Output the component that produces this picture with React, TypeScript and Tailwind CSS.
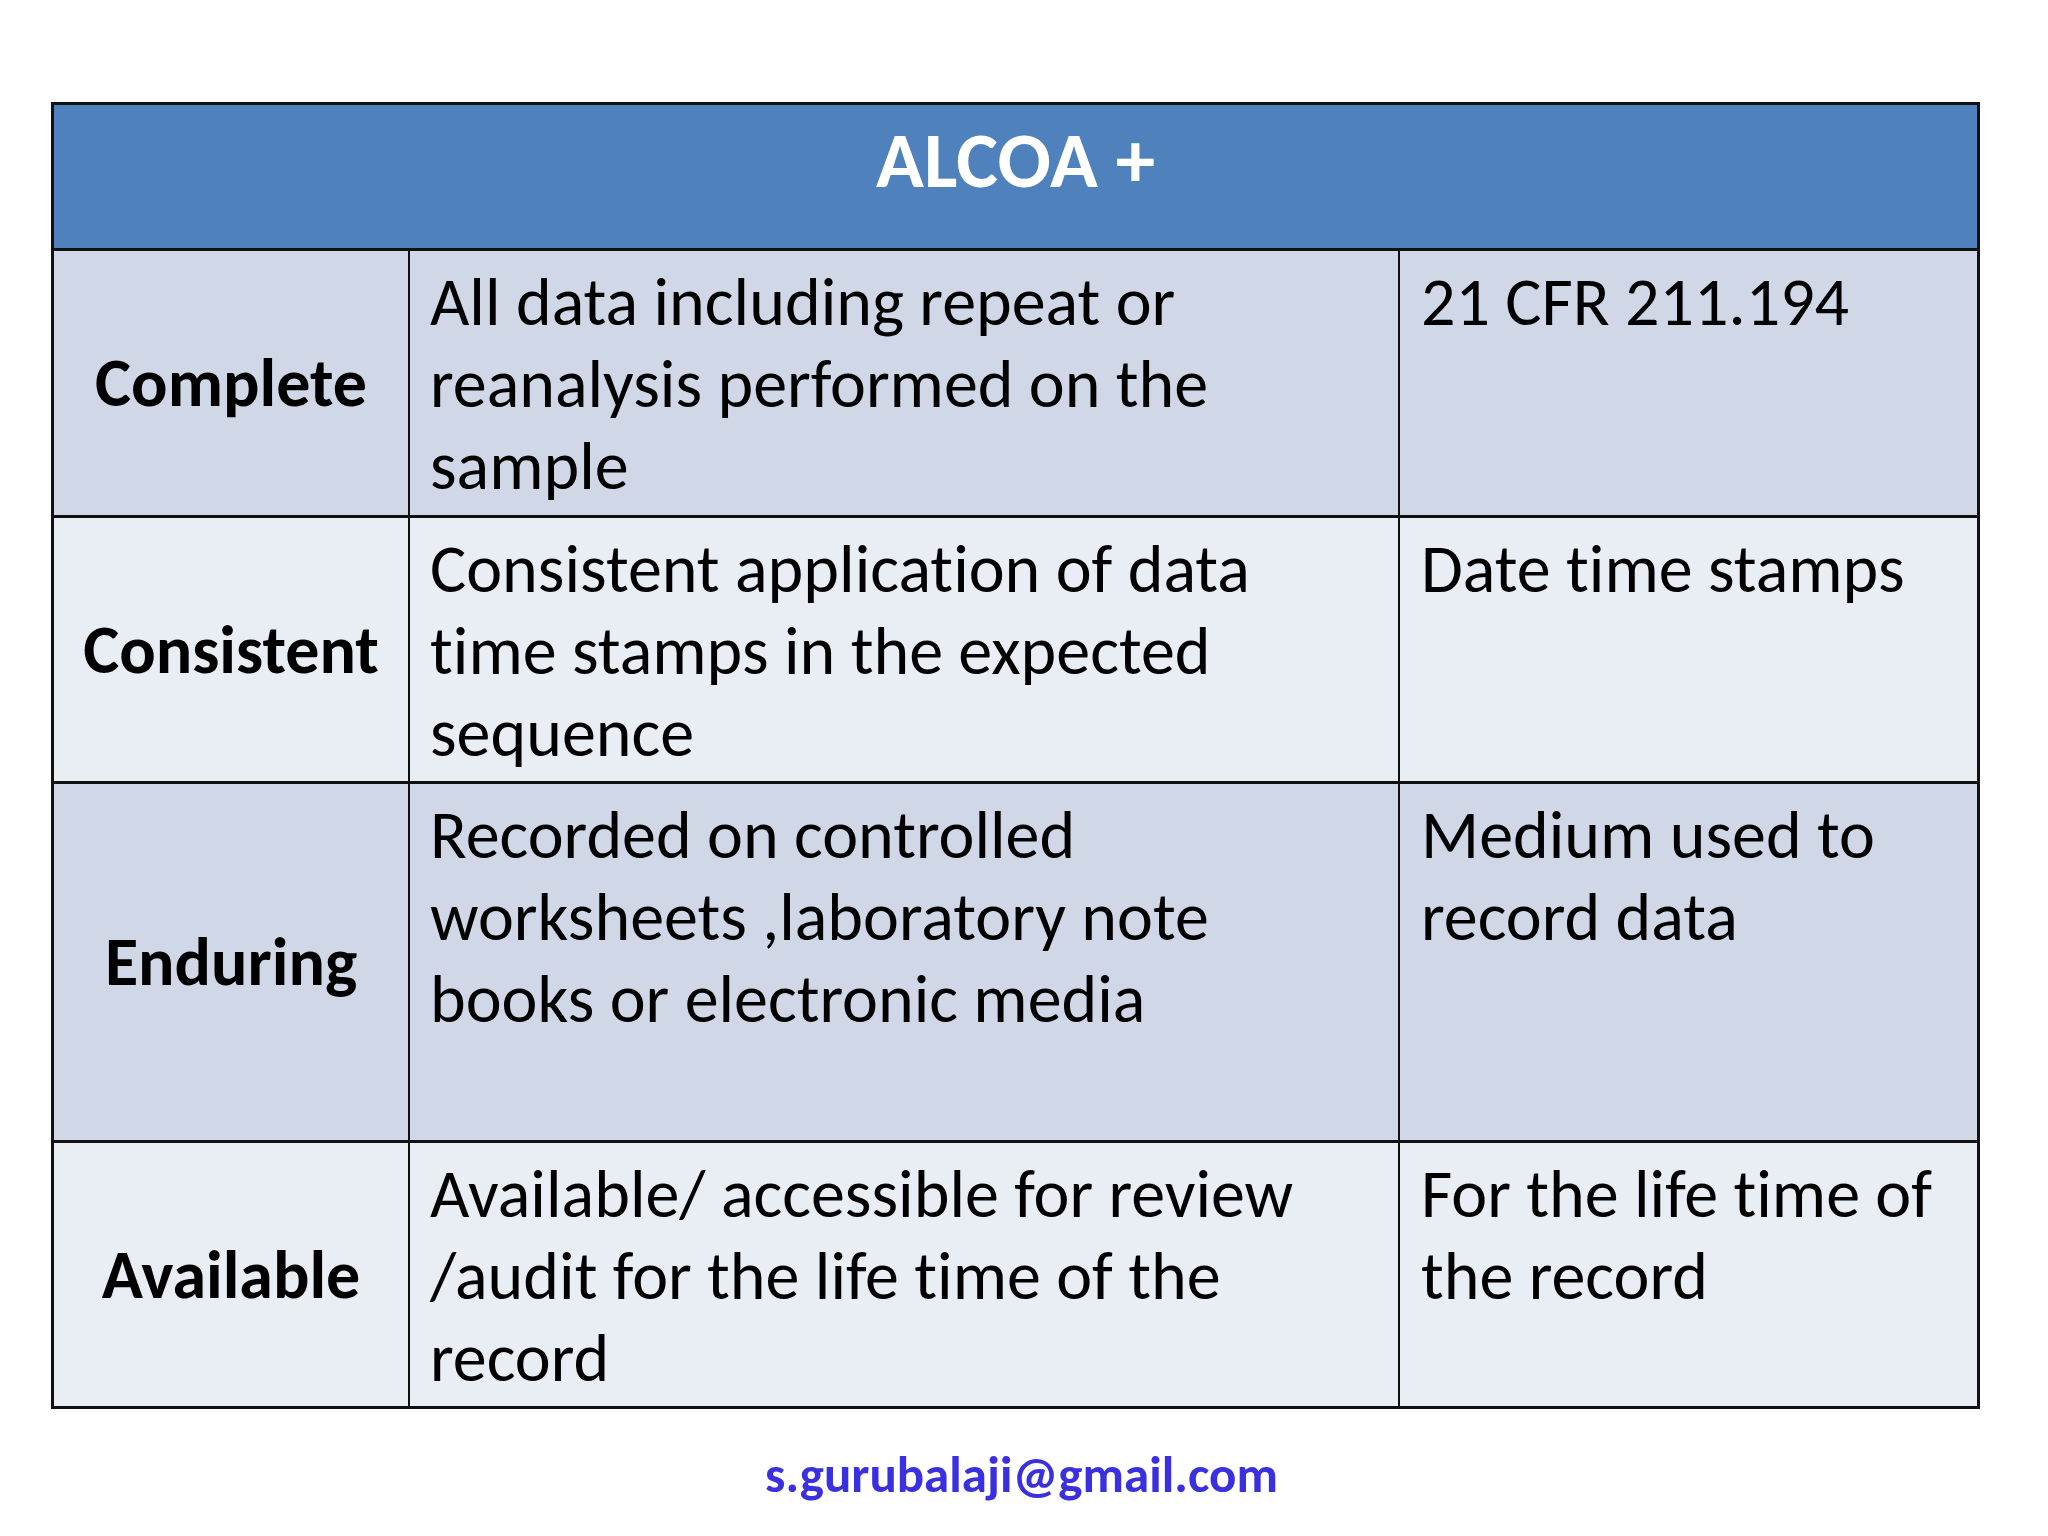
const FONT = "font-['Carlito','Lato','Noto_Sans',sans-serif] [font-variant-ligatures:none]";

const ROWS = [
  {
    label: "Complete",
    text: ["All data including repeat or", "reanalysis performed on the", "sample"],
    ref: ["21 CFR 211.194"],
    h: "h-[267px]",
    bg: "bg-[#d0d8e8]",
  },
  {
    label: "Consistent",
    text: ["Consistent application of data", "time stamps in the expected", "sequence"],
    ref: ["Date time stamps"],
    h: "h-[266px]",
    bg: "bg-[#e9edf4]",
  },
  {
    label: "Enduring",
    text: ["Recorded on controlled", "worksheets ,laboratory note", "books or electronic media"],
    ref: ["Medium used to", "record data"],
    h: "h-[359px]",
    bg: "bg-[#d0d8e8]",
  },
  {
    label: "Available",
    text: ["Available/ accessible for review", "/audit for the life time of the", "record"],
    ref: ["For the life time of", "the record"],
    h: "h-[266px]",
    bg: "bg-[#e9edf4]",
  },
];

const Lines = ({ lines }: { lines: string[] }) => (
  <div className="text-[68px] leading-[82px] text-black">
    {lines.map((l, i) => (
      <div key={i} className="whitespace-nowrap">
        {l}
      </div>
    ))}
  </div>
);

export default function App() {
  return (
    <div className={`w-full h-[1536px] bg-white ${FONT} pt-[102px] pl-[51px]`}>
      <div className="w-[1929px] border-[3px] border-[#111]">
        <div className="h-[143px] bg-[#4f81bd] flex justify-center pt-[7px]">
          <span className="text-[79px] leading-[96px] font-bold text-white">ALCOA +</span>
        </div>

        {ROWS.map((row) => (
          <div key={row.label} className={`flex border-t-[3px] border-[#111] ${row.h} ${row.bg}`}>
            <div className="w-[354px] flex items-center justify-center">
              <span className="text-[68px] font-bold text-black whitespace-nowrap">{row.label}</span>
            </div>
            <div className="w-[990px] border-l-[2px] border-[#111] pl-[20px] pt-[10px]">
              <Lines lines={row.text} />
            </div>
            <div className="flex-1 border-l-[2px] border-[#111] pl-[21px] pt-[10px]">
              <Lines lines={row.ref} />
            </div>
          </div>
        ))}
      </div>

      <div className="w-[1929px] flex justify-center pt-[36px] pl-[12px]">
        <span className="text-[51px] leading-[60px] font-bold text-[#3b30e0]">s.gurubalaji@gmail.com</span>
      </div>
    </div>
  );
}
